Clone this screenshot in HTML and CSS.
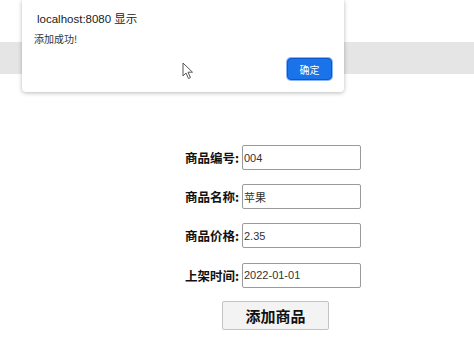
FILE: index.html
```html
<!DOCTYPE html>
<html lang="zh">
<head>
<meta charset="utf-8">
<title>添加商品</title>
<link rel="stylesheet" href="styles.css">
</head>
<body>
<div class="band"></div>
<form class="form">
  <div class="row"><label class="lbl">商品编号:</label><input class="inp" type="text" value="004"></div>
  <div class="row"><label class="lbl">商品名称:</label><input class="inp" type="text" value="苹果"></div>
  <div class="row"><label class="lbl">商品价格:</label><input class="inp" type="text" value="2.35"></div>
  <div class="row"><label class="lbl">上架时间:</label><input class="inp" type="text" value="2022-01-01"></div>
  <div class="actions"><button type="button" class="submit">添加商品</button></div>
</form>

<div class="dialog">
  <div class="dlg-title">localhost:8080 显示</div>
  <div class="dlg-msg">添加成功!</div>
  <div class="dlg-actions"><button type="button" class="ok">确定</button></div>
</div>

<svg class="cursor" width="12" height="18" viewBox="0 0 12 18"><path d="M1 1 L1 14 L4 11 L6.5 16.5 L8.5 15.6 L6 10.2 L10.5 10.2 Z" fill="#fff" stroke="#555" stroke-width="1" stroke-linejoin="round"/></svg>
</body>
</html>
```
FILE: styles.css
```css
html, body {
  margin: 0;
  padding: 0;
  background: #fff;
  font-family: "Liberation Sans", "Noto Sans CJK SC", sans-serif;
}
.band {
  margin-top: 42px;
  height: 32px;
  background: #e5e5e5;
}
.form {
  margin: 71px 0 0 0;
  padding-left: 178px;
}
.row {
  display: flex;
  align-items: center;
  height: 25px;
  margin-bottom: 14.2px;
}
.lbl {
  width: 61px;
  text-align: right;
  font-family: "Noto Sans CJK SC", sans-serif;
  font-weight: bold;
  font-size: 12.5px;
  color: #111;
  margin-right: 3px;
  white-space: nowrap;
}
.inp {
  box-sizing: border-box;
  width: 119px;
  height: 25px;
  margin: 0;
  padding: 0 1px;
  border: 1px solid #9a9a9a;
  border-radius: 2px;
  font-family: "Liberation Sans", "Noto Sans CJK SC", sans-serif;
  font-size: 11px;
  color: #333;
  background: #fff;
}
.actions {
  padding-left: 44px;
  margin-top: -1px;
}
.submit {
  box-sizing: border-box;
  width: 107px;
  height: 29px;
  border: 1px solid #c3c3c3;
  border-radius: 2px;
  background: #f3f3f3;
  font-family: "Noto Sans CJK SC", sans-serif;
  font-weight: bold;
  font-size: 15px;
  color: #111;
  padding: 0;
}
.dialog {
  position: absolute;
  left: 22px;
  top: 0;
  width: 322px;
  height: 92px;
  box-sizing: border-box;
  background: #fff;
  border-radius: 0 0 4px 4px;
  box-shadow: 0 1px 4px rgba(0,0,0,0.28);
  padding: 10px 12px 0 12px;
}
.dlg-title {
  font-family: "Liberation Sans", "Noto Sans CJK SC", sans-serif;
  font-size: 11.5px;
  color: #202124;
  padding-left: 3px;
  line-height: 18px;
}
.dlg-msg {
  font-family: "Noto Sans CJK SC", sans-serif;
  font-size: 10px;
  color: #333;
  margin-top: 4px;
  line-height: 14px;
}
.dlg-actions {
  display: flex;
  justify-content: flex-end;
  margin-top: 12px;
}
.ok {
  box-sizing: border-box;
  width: 45px;
  height: 22px;
  margin-right: 0;
  border: 1px solid #0b57d0;
  border-radius: 4px;
  background: #1a73e8;
  color: #fff;
  font-family: "Noto Sans CJK SC", sans-serif;
  font-size: 10px;
  padding: 0;
  box-shadow: 0 0 0 1px #8ab4f8;
}
.cursor {
  position: absolute;
  left: 182px;
  top: 62px;
}
```
